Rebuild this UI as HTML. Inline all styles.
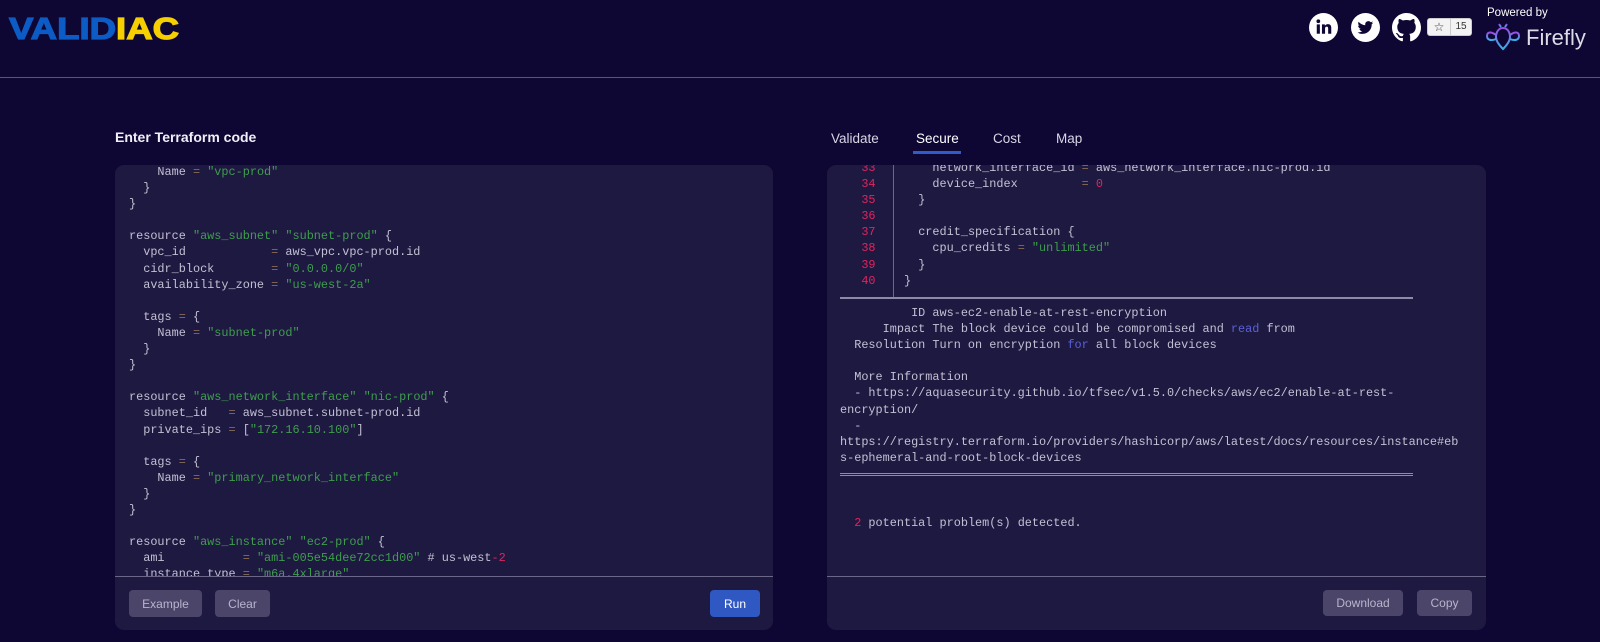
<!DOCTYPE html>
<html><head><meta charset="utf-8"><style>
*{margin:0;padding:0;box-sizing:border-box}
html,body{width:1600px;height:642px;overflow:hidden;background:#0e0633;font-family:"Liberation Sans",sans-serif}
.a{position:absolute}
pre{font-family:"Liberation Mono",monospace;font-size:11.85px;line-height:16.1px;color:#c3c0d4;white-space:pre}
.s{color:#3f9d4e}.e{color:#8c6b55}.n{color:#e0245e}.k{color:#5b60d8}
.panel{background:#1e1940;border-radius:9px;overflow:hidden}
.btn{position:absolute;border-radius:4px;background:#4b4569;color:#b9b4cc;font-size:12px;display:flex;align-items:center;justify-content:center}
.tab{position:absolute;top:131px;font-size:13.5px;color:#d9d6e6;font-weight:500}
</style></head><body>
<div class="a" style="left:9px;top:12px;font-size:31px;font-weight:700;line-height:34px;transform:scaleX(1.18);transform-origin:0 0;-webkit-text-stroke:1.2px currentColor"><span style="color:#0d5bc4">VALID</span><span style="color:#f6cf00">IAC</span></div>

<svg class="a" style="left:1309px;top:13px" width="29" height="29" viewBox="0 0 28 28"><circle cx="14" cy="14" r="14" fill="#fff"/><rect x="7.5" y="11" width="3" height="9" fill="#0e0633"/><circle cx="9" cy="8" r="1.8" fill="#0e0633"/><path d="M12.5 11h2.8v1.3c.6-1 1.7-1.6 3-1.6 2.300 0 3.2 1.4 3.2 3.8V20h-3v-5c0-1.2-.4-1.9-1.4-1.9s-1.6.7-1.6 1.9v5h-3z" fill="#0e0633"/></svg>
<svg class="a" style="left:1351px;top:13px" width="29" height="29" viewBox="0 0 28 28"><circle cx="14" cy="14" r="14" fill="#fff"/><path d="M21.5 9.3c-.6.3-1.2.4-1.8.5.7-.4 1.1-1 1.4-1.7-.6.4-1.3.6-2 .8a3.1 3.1 0 0 0-5.3 2.8c-2.6-.1-4.9-1.4-6.4-3.3-.8 1.4-.4 3.2.9 4.1-.5 0-1-.2-1.4-.4 0 1.5 1.1 2.8 2.5 3.1-.5.1-1 .2-1.4.1.4 1.3 1.6 2.1 2.9 2.2a6.3 6.3 0 0 1-4.6 1.3c1.4.9 3.1 1.4 4.8 1.4 5.8 0 9.1-4.9 8.9-9.4.6-.4 1.1-1 1.5-1.5z" fill="#0e0633"/></svg>
<svg class="a" style="left:1392px;top:13px" width="29" height="29" viewBox="0 0 16 16"><path fill="#fff" d="M8 0C3.58 0 0 3.58 0 8c0 3.54 2.29 6.53 5.47 7.59.4.07.55-.17.55-.38 0-.19-.01-.82-.01-1.49-2.01.37-2.53-.49-2.69-.94-.09-.23-.48-.94-.82-1.13-.28-.15-.68-.52-.01-.53.63-.01 1.080.58 1.23.82.72 1.21 1.87.87 2.33.66.07-.52.28-.87.51-1.07-1.78-.2-3.64-.89-3.64-3.95 0-.87.31-1.59.82-2.15-.08-.2-.36-1.02.08-2.12 0 0 .67-.21 2.2.82.64-.18 1.32-.27 2-.27.68 0 1.36.09 2 .27 1.53-1.04 2.2-.82 2.2-.82.44 1.1.16 1.92.08 2.12.51.56.82 1.27.82 2.15 0 3.07-1.87 3.75-3.65 3.95.29.25.54.73.54 1.48 0 1.07-.01 1.93-.01 2.2 0 .21.15.46.55.38A8.013 8.013 0 0016 8c0-4.42-3.58-8-8-8z"/></svg>
<div class="a" style="left:1427px;top:18px;width:45px;height:18px;background:#f3f3f3;border:1px solid #ccc;border-radius:3px;display:flex;font-size:10px;color:#333">
<div style="width:23px;border-right:1px solid #ccc;text-align:center;line-height:16px;font-size:12px">☆</div><div style="flex:1;text-align:center;line-height:16px">15</div></div>

<div class="a" style="left:1487px;top:7px;font-size:11.5px;color:#fff">Powered by</div>
<svg class="a" style="left:1485px;top:22px" width="36" height="30" viewBox="0 0 36 30"><defs><linearGradient id="g" x1="0" y1="0" x2="0" y2="1"><stop offset="0" stop-color="#9b4de0"/><stop offset="1" stop-color="#3ab0e8"/></linearGradient></defs><g fill="none" stroke="url(#g)" stroke-width="2"><path d="M18 6c-5 0-7 5-7 9s3 8 7 12c4-4 7-8 7-12s-2-9-7-9z"/><path d="M11 13C6 9 2 10 2 14s4 5 9 3M25 13c5-4 9-3 9 1s-4 5-9 3"/><path d="M14 2l2 3M22 2l-2 3"/></g></svg>
<div class="a" style="left:1526px;top:25px;font-size:22px;color:#dcdbe6">Firefly</div>

<div class="a" style="left:0;top:77px;width:1600px;height:1px;background:#5a5478"></div>

<div class="a" style="left:115px;top:129px;font-size:14px;font-weight:700;color:#f0eff6">Enter Terraform code</div>

<div class="a panel" style="left:115px;top:165px;width:658px;height:465px">
<pre class="a" style="left:14px;top:-1px;height:412px;overflow:hidden;width:640px">    Name <span class="e">=</span> <span class="s">"vpc-prod"</span>
  }
}

resource <span class="s">"aws_subnet"</span> <span class="s">"subnet-prod"</span> {
  vpc_id            <span class="e">=</span> aws_vpc.vpc-prod.id
  cidr_block        <span class="e">=</span> <span class="s">"0.0.0.0/0"</span>
  availability_zone <span class="e">=</span> <span class="s">"us-west-2a"</span>

  tags <span class="e">=</span> {
    Name <span class="e">=</span> <span class="s">"subnet-prod"</span>
  }
}

resource <span class="s">"aws_network_interface"</span> <span class="s">"nic-prod"</span> {
  subnet_id   <span class="e">=</span> aws_subnet.subnet-prod.id
  private_ips <span class="e">=</span> [<span class="s">"172.16.10.100"</span>]

  tags <span class="e">=</span> {
    Name <span class="e">=</span> <span class="s">"primary_network_interface"</span>
  }
}

resource <span class="s">"aws_instance"</span> <span class="s">"ec2-prod"</span> {
  ami           <span class="e">=</span> <span class="s">"ami-005e54dee72cc1d00"</span> # us-west<span class="n">-2</span>
  instance_type <span class="e">=</span> <span class="s">"m6a.4xlarge"</span></pre>
<div class="a" style="left:0;top:411px;width:658px;height:1px;background:#6c6788"></div>
<div class="btn" style="left:14px;top:425px;width:73px;height:27px">Example</div>
<div class="btn" style="left:100px;top:425px;width:55px;height:27px">Clear</div>
<div class="btn" style="left:595px;top:425px;width:50px;height:27px;background:#2f58c2;color:#fff">Run</div>
</div>

<div class="tab" style="left:831px">Validate</div>
<div class="tab" style="left:916px;color:#fff">Secure</div>
<div class="tab" style="left:993px">Cost</div>
<div class="tab" style="left:1056px">Map</div>
<div class="a" style="left:913px;top:151px;width:48px;height:3px;background:#2f5cc8"></div>

<div class="a panel" style="left:827px;top:165px;width:659px;height:465px">
<div class="a" style="left:0;top:0;width:659px;height:411px;overflow:hidden">
<div class="a" style="left:66px;top:0;width:1px;height:133px;background:#6c6788"></div>
<pre class="a" style="left:13px;top:-5px">   <span class="n">33</span>        network_interface_id <span class="e">=</span> aws_network_interface.nic-prod.id
   <span class="n">34</span>        device_index         <span class="e">=</span> <span class="n">0</span>
   <span class="n">35</span>      }
   <span class="n">36</span>
   <span class="n">37</span>      credit_specification {
   <span class="n">38</span>        cpu_credits <span class="e">=</span> <span class="s">"unlimited"</span>
   <span class="n">39</span>      }
   <span class="n">40</span>    }</pre>
<div class="a" style="left:13px;top:132px;width:573px;height:2px;background:#8d89a6"></div>
<pre class="a" style="left:13px;top:140px">          ID aws-ec2-enable-at-rest-encryption
      Impact The block device could be compromised and <span class="k">read</span> from
  Resolution Turn on encryption <span class="k">for</span> all block devices

  More Information
  - https://aquasecurity.github.io/tfsec/v1.5.0/checks/aws/ec2/enable-at-rest-
encryption/
  -
https://registry.terraform.io/providers/hashicorp/aws/latest/docs/resources/instance#eb
s-ephemeral-and-root-block-devices</pre>
<div class="a" style="left:13px;top:308px;width:573px;height:3px;border-top:1px solid #8d89a6;border-bottom:1px solid #8d89a6"></div>
<pre class="a" style="left:13px;top:350px">  <span class="n">2</span> potential problem(s) detected.</pre>
</div>
<div class="a" style="left:0;top:411px;width:659px;height:1px;background:#6c6788"></div>
<div class="btn" style="left:496px;top:425px;width:80px;height:26px">Download</div>
<div class="btn" style="left:590px;top:425px;width:55px;height:26px">Copy</div>
</div>
</body></html>
